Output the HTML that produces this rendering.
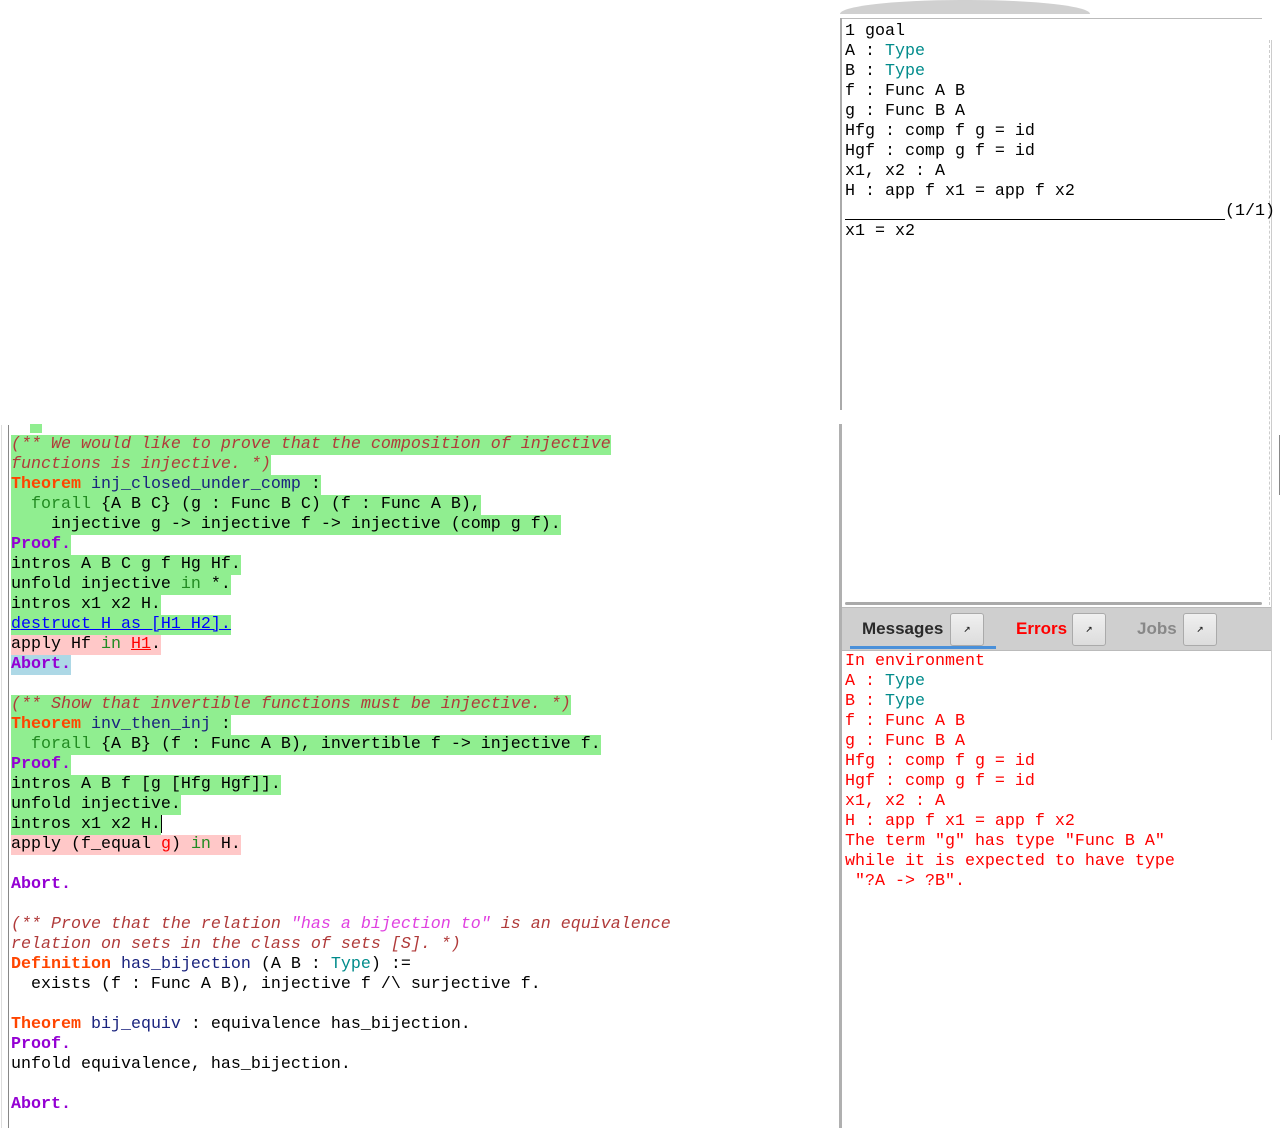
<!DOCTYPE html>
<html><head><meta charset="utf-8"><style>
body{margin:0;width:1280px;height:1128px;position:relative;background:#fff;overflow:hidden;font-family:"Liberation Mono",monospace;font-size:16.67px;}
.ed{position:absolute;left:11px;top:435px;}
.l{height:20px;line-height:20px;white-space:pre;}
.l span.b{display:inline-block;height:20px;}
.g{background:#90ee90}.p{background:#ffc8c8}.lb{background:#add8e6}
.c{color:#b03a3a;font-style:italic}
.k{color:#ff4500;font-weight:bold}
.pr{color:#9400d3;font-weight:bold}
.id{color:#1a237e}
.gr{color:#228b22}
.t{color:#008b8b}
.s{color:#e040e0;font-style:italic}
.r{color:#f00}
.u{text-decoration:underline}
.bl{color:#00f;text-decoration:underline}
.gp{position:absolute;left:845px;top:22px;}
.msg{position:absolute;left:845px;top:652px;color:#f00}
.tab{position:absolute;font-family:"Liberation Sans",sans-serif;font-weight:bold;font-size:17px;top:619px}
.btn{position:absolute;top:613px;width:32px;height:31px;border:1px solid #aaa;border-radius:3px;background:linear-gradient(#f0f0f0,#dcdcdc);font-size:12px;text-align:center;line-height:31px;color:#222}
</style></head><body>
<div style="position:absolute;left:840px;top:0;width:250px;height:14px;background:#d0d0d0;border-radius:120px 120px 0 0/14px 14px 0 0"></div>
<div style="position:absolute;left:842px;top:18px;width:420px;height:1px;background:#bbb"></div>
<div style="position:absolute;left:840px;top:18px;width:2px;height:392px;background:#aaa"></div>
<div style="position:absolute;left:1269px;top:40px;width:0;height:565px;border-left:1px dashed #ccc"></div>
<div style="position:absolute;left:1271px;top:40px;width:1px;height:700px;background:#ccc"></div>
<div style="position:absolute;left:1279px;top:435px;width:1px;height:60px;background:#888"></div>
<div style="position:absolute;left:839px;top:424px;width:3px;height:704px;background:#b0b0b0"></div>
<div style="position:absolute;left:8px;top:425px;width:1px;height:703px;background:#888"></div>
<div style="position:absolute;left:1px;top:425px;width:1px;height:703px;background:#ddd"></div>

<div class="gp">
<div class="l">1 goal</div>
<div class="l">A : <span class="t">Type</span></div>
<div class="l">B : <span class="t">Type</span></div>
<div class="l">f : Func A B</div>
<div class="l">g : Func B A</div>
<div class="l">Hfg : comp f g = id</div>
<div class="l">Hgf : comp g f = id</div>
<div class="l">x1, x2 : A</div>
<div class="l">H : app f x1 = app f x2</div>
<div class="l"><span style="display:inline-block;width:380px;height:17px;border-bottom:1px solid #000;vertical-align:top"></span>(1/1)</div>
<div class="l">x1 = x2</div>
</div>

<div style="position:absolute;left:845px;top:602px;width:417px;height:3px;background:#aaa;border-radius:2px"></div>
<div style="position:absolute;left:842px;top:607px;width:429px;height:42px;background:#cfcfcf;border-top:1px solid #bbb;border-bottom:1px solid #bbb"></div>
<div style="position:absolute;left:850px;top:646px;width:146px;height:3px;background:#4a90d9"></div>
<div class="tab" style="left:862px;color:#2a2a2a">Messages</div>
<div class="btn" style="left:950px">&#x2197;</div>
<div class="tab" style="left:1016px;color:#f00">Errors</div>
<div class="btn" style="left:1072px">&#x2197;</div>
<div class="tab" style="left:1137px;color:#888">Jobs</div>
<div class="btn" style="left:1183px">&#x2197;</div>

<div class="msg">
<div class="l">In environment</div>
<div class="l">A : <span class="t">Type</span></div>
<div class="l">B : <span class="t">Type</span></div>
<div class="l">f : Func A B</div>
<div class="l">g : Func B A</div>
<div class="l">Hfg : comp f g = id</div>
<div class="l">Hgf : comp g f = id</div>
<div class="l">x1, x2 : A</div>
<div class="l">H : app f x1 = app f x2</div>
<div class="l">The term "g" has type "Func B A"</div>
<div class="l">while it is expected to have type</div>
<div class="l"> "?A -&gt; ?B".</div>
</div>

<div style="position:absolute;left:30px;top:424px;width:12px;height:9px;background:#90ee90"></div>
<div class="ed">
<div class="l"><span class="b g c">(** We would like to prove that the composition of injective</span></div>
<div class="l"><span class="b g c">functions is injective. *)</span></div>
<div class="l"><span class="b g"><span class="k">Theorem</span> <span class="id">inj_closed_under_comp</span> :</span></div>
<div class="l"><span class="b g">  <span class="gr">forall</span> {A B C} (g : Func B C) (f : Func A B),</span></div>
<div class="l"><span class="b g">    injective g -&gt; injective f -&gt; injective (comp g f).</span></div>
<div class="l"><span class="b g"><span class="pr">Proof.</span></span></div>
<div class="l"><span class="b g">intros A B C g f Hg Hf.</span></div>
<div class="l"><span class="b g">unfold injective <span class="gr">in</span> *.</span></div>
<div class="l"><span class="b g">intros x1 x2 H.</span></div>
<div class="l"><span class="b g bl">destruct H as [H1 H2].</span></div>
<div class="l"><span class="b p">apply Hf <span class="gr">in</span> <span class="r u">H1</span>.</span></div>
<div class="l"><span class="b lb"><span class="pr">Abort.</span></span></div>
<div class="l"> </div>
<div class="l"><span class="b g c">(** Show that invertible functions must be injective. *)</span></div>
<div class="l"><span class="b g"><span class="k">Theorem</span> <span class="id">inv_then_inj</span> :</span></div>
<div class="l"><span class="b g">  <span class="gr">forall</span> {A B} (f : Func A B), invertible f -&gt; injective f.</span></div>
<div class="l"><span class="b g"><span class="pr">Proof.</span></span></div>
<div class="l"><span class="b g">intros A B f [g [Hfg Hgf]].</span></div>
<div class="l"><span class="b g">unfold injective.</span></div>
<div class="l"><span class="b g">intros x1 x2 H.</span><span style="display:inline-block;width:1px;height:18px;background:#000;vertical-align:top"></span></div>
<div class="l"><span class="b p">apply (f_equal <span class="r u">g</span>) <span class="gr">in</span> H.</span></div>
<div class="l"> </div>
<div class="l"><span class="pr">Abort.</span></div>
<div class="l"> </div>
<div class="l"><span class="c">(** Prove that the relation <span class="s">"has a bijection to"</span> is an equivalence</span></div>
<div class="l"><span class="c">relation on sets in the class of sets [S]. *)</span></div>
<div class="l"><span class="k">Definition</span> <span class="id">has_bijection</span> (A B : <span class="t">Type</span>) :=</div>
<div class="l">  exists (f : Func A B), injective f /\ surjective f.</div>
<div class="l"> </div>
<div class="l"><span class="k">Theorem</span> <span class="id">bij_equiv</span> : equivalence has_bijection.</div>
<div class="l"><span class="pr">Proof.</span></div>
<div class="l">unfold equivalence, has_bijection.</div>
<div class="l"> </div>
<div class="l"><span class="pr">Abort.</span></div>
</div>
</body></html>
